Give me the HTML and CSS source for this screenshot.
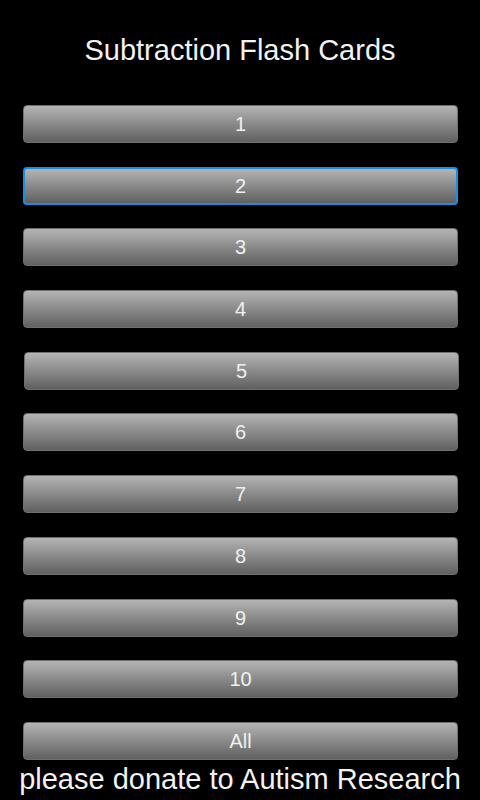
FILE: index.html
```html
<!DOCTYPE html>
<html>
<head>
<meta charset="utf-8">
<link rel="stylesheet" href="styles.css">
</head>
<body>
<div class="screen">
  <h1 class="title">Subtraction Flash Cards</h1>
  <div class="list">
    <button class="btn">1</button>
    <button class="btn focused">2</button>
    <button class="btn">3</button>
    <button class="btn">4</button>
    <button class="btn shift">5</button>
    <button class="btn">6</button>
    <button class="btn">7</button>
    <button class="btn">8</button>
    <button class="btn">9</button>
    <button class="btn">10</button>
    <button class="btn">All</button>
  </div>
  <p class="donate">please donate to Autism Research</p>
</div>
</body>
</html>
```
FILE: styles.css
```css
html, body {
  margin: 0;
  padding: 0;
  background: #000;
}
.screen {
  width: 480px;
  height: 800px;
  background: #000;
  font-family: "Liberation Sans", Arial, sans-serif;
  color: #f2f2f2;
  overflow: hidden;
  display: flex;
  flex-direction: column;
}
.title {
  margin: 0;
  padding-top: 34px;
  height: 105px;
  flex-shrink: 0;
  box-sizing: border-box;
  font-size: 29px;
  font-weight: normal;
  text-align: center;
  line-height: 32px;
}
.list {
  display: flex;
  flex-direction: column;
  gap: 23.7px;
  padding: 0 22px 0 23px;
}
.btn {
  height: 38px;
  width: 100%;
  margin: 0;
  border: 1px solid #6f6f6f;
  border-radius: 4px;
  background: linear-gradient(to bottom, #b4b4b4 0%, #8e8e8e 45%, #606060 100%);
  color: #f0f0f0;
  font-family: "Liberation Sans", Arial, sans-serif;
  font-size: 20px;
  line-height: 36px;
  padding: 0;
  text-align: center;
  box-sizing: border-box;
  flex-shrink: 0;
}
.btn.focused {
  border: 2px solid #1a8fe0;
  line-height: 34px;
}
.btn.shift {
  margin-left: 1px;
}
.donate {
  margin: 0;
  margin-top: 3px;
  font-size: 29px;
  line-height: 32px;
  text-align: center;
  white-space: nowrap;
}
```
